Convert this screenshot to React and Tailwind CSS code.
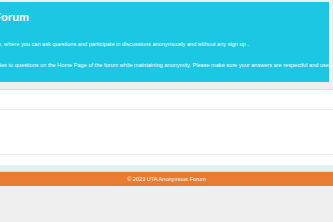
import React from "react";

function Clip({ children }) {
  return (
    <span className="inline-flex w-0 justify-end overflow-visible whitespace-nowrap">
      {children}
    </span>
  );
}

export default function App() {
  return (
    <div
      className="w-full h-[222px] overflow-hidden bg-[#efefef] text-white"
      style={{ fontFamily: '"Liberation Sans", Arial, sans-serif' }}
    >
      <div className="mt-[2px] mr-[4px] h-[80px] bg-[#1bc7e3] pl-[1px] pt-[9.4px]">
        <h1 className="whitespace-nowrap text-[11.2px] font-bold leading-[13.44px]">
          <Clip>Welcome to UTA Anonymous F</Clip>orum
        </h1>
        <p className="mt-[15.6px] whitespace-nowrap text-[5.6px] leading-[8.4px]">
          <Clip>Welcome to the UTA Anonymous Forum</Clip>, where you can ask questions and
          participate in discussions anonymously and without any sign up .
        </p>
        <p className="mt-[12.6px] whitespace-nowrap text-[5.6px] leading-[8.4px]">
          <Clip>You can post repli</Clip>es to questions on the Home Page of the forum while
          maintaining anonymity. Please make sure your answers are respectful and useful.
        </p>
      </div>
      <div className="mt-[7px] border-t border-[#c9edf1] bg-white">
        <div className="h-[20px] border-b border-[#eeeeee]" />
        <div className="h-[45px] border-b border-[#eeeeee]" />
        <div className="h-[10px]" />
      </div>
      <div className="h-[6px] bg-[#e0f2f2]" />
      <div className="h-[1px] bg-[#dddddd]" />
      <div className="flex h-[14px] items-center justify-center bg-[#e97c30] text-[5.6px]">
        © 2023 UTA Anonymous Forum
      </div>
    </div>
  );
}
